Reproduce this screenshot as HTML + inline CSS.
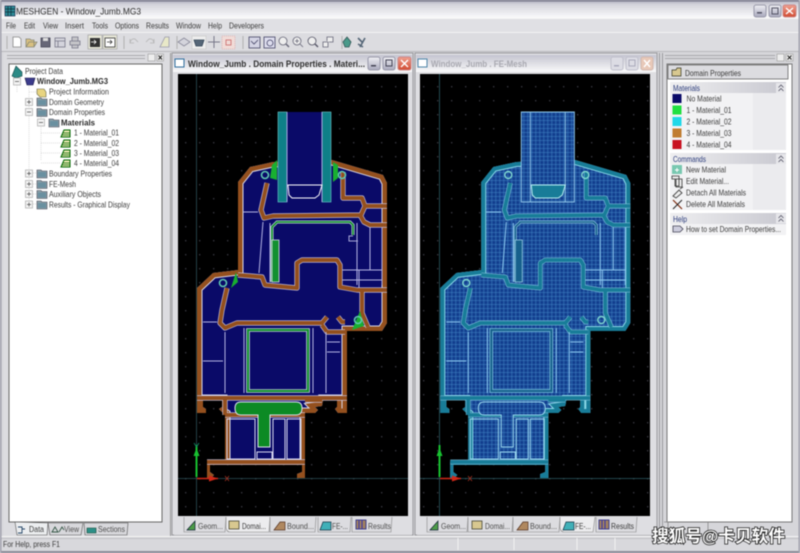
<!DOCTYPE html>
<html><head><meta charset="utf-8"><style>
html,body{margin:0;padding:0;background:#d6d6da;width:800px;height:553px;overflow:hidden}
svg{display:block;filter:blur(.4px)}
text{font-family:"Liberation Sans","Noto Sans CJK SC",sans-serif;font-size:8.6px;fill:#3c3c3c}
.lb{font-size:8.6px;fill:#505050}
</style></head><body>
<svg width="800" height="553" viewBox="0 0 800 553" xmlns="http://www.w3.org/2000/svg">
<defs>
<linearGradient id="tb" x1="0" y1="0" x2="0" y2="1"><stop offset="0" stop-color="#a8a8b8"/><stop offset=".25" stop-color="#d4d4dc"/><stop offset="1" stop-color="#fbfbfc"/></linearGradient>
<linearGradient id="tc" x1="0" y1="0" x2="0" y2="1"><stop offset="0" stop-color="#c4c4d0"/><stop offset="1" stop-color="#fafafa"/></linearGradient>
<linearGradient id="hd" x1="0" y1="0" x2="1" y2="0"><stop offset="0" stop-color="#eeeef0"/><stop offset="1" stop-color="#c8c8d0"/></linearGradient>
<linearGradient id="btn" x1="0" y1="0" x2="0" y2="1"><stop offset="0" stop-color="#f0f0f4"/><stop offset="1" stop-color="#a8a8bc"/></linearGradient>
<linearGradient id="cl" x1="0" y1="0" x2="0" y2="1"><stop offset="0" stop-color="#f0a090"/><stop offset="1" stop-color="#d04a30"/></linearGradient>
<pattern id="dots" width="14" height="14" patternUnits="userSpaceOnUse" x="3" y="2"><rect x="0" y="0" width="1.4" height="1.4" fill="#34343c"/></pattern>
<pattern id="mesh" width="4" height="4" patternUnits="userSpaceOnUse"><rect width="4" height="4" fill="#123e8e"/><path d="M0 .5H4M.5 0V4" stroke="#3f84c4" stroke-width=".6"/></pattern>
<path id="sil" d="M273 162L250 167L238 182L238 270L213 273L197 288L197 413L206 413L206 409L203 407L203 400L222 400L222 407L219 409L222 412L225 414L225 460L207 462L207 478L211 478L214 475L210 472L210 465L302 465L302 472L297 474L297 478L305 478L305 413L315 413L318 410L315 407L322 406L323 400L337 400L337 407L335 409L338 413L347 413L347 331L382 331L387 323L387 183L383 175L332 160Z"/>
<clipPath id="silc"><use href="#sil"/></clipPath>
<path id="walls" fill="none" stroke-linejoin="round" d="M267 183L261 210L264 218L273 216L360 215L364 222L370 225L387 225M343 172L343 198L362 198L365 206L387 206M365 206L361 215M238 275L262 277L265 285L297 288L297 263L302 260L337 260L340 265L340 287L357 290L387 290M362 290L362 313L368 327M227 288L222 310L220 323L225 328L237 323L322 323L327 317M322 325L327 332L345 332M338 317L342 322L345 322M197 398L347 398M225 398L225 415M225 415L305 415M207 462L305 462M305 400L322 400"/>
<path id="thin" fill="none" d="M225 332V393M203 322H217M203 361H223M244 328V393M313 328V393M326 332V393M327 342H340M327 352H340M243 212H258M263 222L259 273M270 223V282M357 223V285M370 227V270M342 270H382M382 227V285M342 280H382M359 270V288"/>
<path id="cav" fill="none" d="M227 419H255V459H227ZM273 419H285V459H273ZM287 419H301V459H287ZM257 452H272V459H257Z"/>
<path id="rect1" fill="none" d="M248 330H308V391H248Z"/>
<path id="glue" fill="none" d="M353 235V225L350 222H277L272 227V282"/>
<path id="blob" d="M241 402H296Q302 402 302 408Q302 415 296 415H270V447H258V415H241Q235 415 235 408Q235 402 241 402Z"/>
<path id="thick" d="M272 240H279V282H272Z"/>
<g id="seals" fill="none"><circle cx="265" cy="175" r="3.5"/><circle cx="342" cy="175" r="3.5"/><circle cx="223" cy="283" r="3.5"/><circle cx="358" cy="320" r="3.5"/></g>
<g id="ic-folder"><path d="M0 2H4L5 3H10V10H0Z" fill="#8aa0a8" stroke="#445" stroke-width=".6"/><rect x="1" y="4" width="8" height="5" fill="#6a90a0"/></g>
<g id="ic-mat"><path d="M0 9L3 2H9V9Z" fill="#e8e8b0" stroke="#060" stroke-width="1"/><path d="M2 5H9M1 7H9" stroke="#060" stroke-width=".8"/></g>
<g id="box"><rect x="-3.5" y="-3.5" width="7" height="7" fill="#f4f4f4" stroke="#aaa" stroke-width=".7"/><path d="M-2 0H2" stroke="#555" stroke-width=".8"/></g>
<g id="boxp"><use href="#box"/><path d="M0 -2V2" stroke="#555" stroke-width=".8"/></g>
<g id="chev"><rect x="-5" y="-5" width="10" height="10" fill="#e6e6ea"/><path d="M-2.5 -.5L0 -3L2.5 -.5M-2.5 3L0 .5L2.5 3" fill="none" stroke="#556" stroke-width=".8"/></g>
</defs>

<rect width="800" height="553" fill="#d6d6da"/>
<!-- title bar -->
<rect x="0" y="0" width="800" height="18" fill="url(#tb)"/>
<rect x="0" y="0" width="800" height="1.5" fill="#78788c"/>
<rect x="5" y="6" width="10" height="10" fill="#2c8a96" stroke="#124" stroke-width=".6"/>
<path d="M8 6V16M11 6V16M5 9H15M5 12H15" stroke="#10303a" stroke-width=".7"/>
<text x="16" y="14.5" textLength="125" lengthAdjust="spacingAndGlyphs" style="font-size:9.4px;fill:#303030">MESHGEN - Window_Jumb.MG3</text>
<rect x="754" y="5" width="12" height="12" rx="2" fill="url(#btn)" stroke="#99a"/><rect x="757" y="12" width="5" height="1.6" fill="#556"/>
<rect x="769" y="5" width="12" height="12" rx="2" fill="url(#btn)" stroke="#99a"/><rect x="772" y="8" width="6" height="6" fill="none" stroke="#556"/>
<rect x="783" y="5" width="13" height="12" rx="2" fill="url(#cl)" stroke="#c88"/><path d="M786 8L793 14M793 8L786 14" stroke="#fff" stroke-width="1.4"/>

<!-- menu -->
<rect x="0" y="18" width="800" height="14" fill="#e0e0e4"/>
<rect x="0" y="18" width="800" height="1" fill="#f4f4f4"/>
<g>
<text x="6" y="28.500" textLength="10" lengthAdjust="spacingAndGlyphs">File</text>
<text x="24" y="28.500" textLength="11" lengthAdjust="spacingAndGlyphs">Edit</text>
<text x="43" y="28.500" textLength="15" lengthAdjust="spacingAndGlyphs">View</text>
<text x="65" y="28.500" textLength="19" lengthAdjust="spacingAndGlyphs">Insert</text>
<text x="92" y="28.500" textLength="16" lengthAdjust="spacingAndGlyphs">Tools</text>
<text x="115" y="28.500" textLength="24" lengthAdjust="spacingAndGlyphs">Options</text>
<text x="146" y="28.500" textLength="23" lengthAdjust="spacingAndGlyphs">Results</text>
<text x="176" y="28.500" textLength="25" lengthAdjust="spacingAndGlyphs">Window</text>
<text x="208" y="28.500" textLength="14" lengthAdjust="spacingAndGlyphs">Help</text>
<text x="229" y="28.500" textLength="35" lengthAdjust="spacingAndGlyphs">Developers</text>
</g>
<rect x="0" y="32" width="800" height="1" fill="#f2f2f2"/>
<rect x="0" y="33" width="800" height="19" fill="#dcdce0"/>
<rect x="0" y="51" width="800" height="1" fill="#b8b8bc"/>
<!-- toolbar -->
<g stroke-width=".8">
<path d="M13 37H19L21 39V47H13Z" fill="#fff" stroke="#888"/>
<path d="M26 47V39H30L31 40H34V47Z M26 47L29 42H37L34 47Z" fill="#d8c080" stroke="#887"/>
<rect x="41" y="38" width="9" height="9" fill="#667" stroke="#445"/><rect x="43" y="38" width="5" height="3" fill="#ddd"/>
<rect x="55" y="38" width="10" height="9" fill="#d4d4dc" stroke="#778"/><path d="M55 41H65M58 41V47" stroke="#778"/>
<path d="M70 45V41H80V45ZM72 41V37H78V41M72 45V48H78V45" fill="#c4c4c8" stroke="#778"/>
<rect x="88" y="35" width="14" height="14" fill="#e8e8d8" stroke="#aaa"/><rect x="90" y="38" width="10" height="9" fill="#333"/><path d="M91 42H96M94 40L96 42L94 44" stroke="#fff" fill="none"/>
<rect x="103" y="35" width="14" height="14" fill="#e8e8d8" stroke="#aaa"/><rect x="105" y="38" width="10" height="9" fill="#fff" stroke="#333"/><path d="M107 42H112M110 40L112 42L110 44" stroke="#333" fill="none"/>
<path d="M130 43Q131 38 135 39L138 42M130 39V43H134" fill="none" stroke="#b4b4b4"/>
<path d="M154 43Q153 38 149 39L146 42M154 39V43H150" fill="none" stroke="#b4b4b4"/>
<path d="M160 47L165 37H169V47Z" fill="#e8e8c8" stroke="#99a"/>
<path d="M178 42L184 38L190 42L184 46Z" fill="#d4d4dc" stroke="#889"/>
<rect x="192" y="36" width="14" height="13" fill="#eee" stroke="#ccc"/><path d="M194 40H204L202 46H196Z" fill="#567" stroke="#345"/>
<path d="M214 36V48M208 42H220" stroke="#778" stroke-width="1"/>
<rect x="222" y="36" width="13" height="13" fill="#f0dcd8" stroke="#daa" stroke-dasharray="1 1"/><rect x="226" y="40" width="5" height="5" fill="none" stroke="#c66"/>
<rect x="249" y="37" width="11" height="11" fill="#d4d4e4" stroke="#446"/><path d="M251 41L254 44L258 40" stroke="#446" fill="none"/>
<rect x="264" y="37" width="11" height="11" fill="#dde" stroke="#446"/><circle cx="270" cy="43" r="3" fill="none" stroke="#446"/>
<circle cx="283" cy="41" r="4" fill="#eee" stroke="#667"/><path d="M286 44L289 47" stroke="#667" stroke-width="1.4"/>
<circle cx="297" cy="41" r="4" fill="#eee" stroke="#667"/><path d="M300 44L303 47M295 41H299M297 39V43" stroke="#667"/>
<circle cx="312" cy="41" r="4" fill="#eee" stroke="#556"/><path d="M315 44L318 47" stroke="#556" stroke-width="1.4"/>
<path d="M323 47V42H328V47ZM327 41V37H333V42H329" fill="#eee" stroke="#667"/>
<path d="M347 37L351 42L349 47H345L343 42Z" fill="#4a9a8a" stroke="#355"/>
<path d="M358 38L362 42M365 38L360 47M358 44L363 47" stroke="#567" stroke-width="1.6" fill="none"/>
</g>
<path d="M7 36V49M124 36V49M177 36V49M243 36V49M342 36V49" stroke="#b0b0b0" stroke-width="1"/>

<!-- left pane -->
<rect x="3" y="52" width="165" height="486" fill="#dcdce0"/>
<path d="M7 55.5H145M7 58.5H145" stroke="#a8a8ac" stroke-width="1"/>
<rect x="148" y="54" width="7" height="7" fill="#eee" stroke="#999" stroke-width=".6"/>
<rect x="157" y="54" width="6.5" height="7" fill="#eee" stroke="#999" stroke-width=".6"/><path d="M158.500 55.500L162 59.500M162 55.500L158.500 59.500" stroke="#222" stroke-width="1"/>
<rect x="9" y="64" width="153" height="458" fill="#fff" stroke="#666" stroke-width="1"/>
<path d="M17 85V92M29 86V204M41 117V160M41 133H60M41 143H60M41 153H60M41 163H60M29 92H36M29 173H36M29 184H36M29 194H36M29 204H36" stroke="#d0d0d0" stroke-width=".7" fill="none" stroke-dasharray="1 1"/>
<path d="M12 76L16 66L22 72V76L16 78Z" fill="#2c8a86" stroke="#144" stroke-width=".6"/>
<path d="M25 78H35L33 85H27Z" fill="#3c3c8c" stroke="#114" stroke-width=".6"/>
<use href="#box" x="17" y="81.500"/>
<use href="#boxp" x="29" y="102"/><use href="#box" x="29" y="112"/><use href="#box" x="41" y="122.500"/>
<use href="#boxp" x="29" y="173.500"/><use href="#boxp" x="29" y="184"/><use href="#boxp" x="29" y="194"/><use href="#boxp" x="29" y="204.500"/>
<path d="M37 89H44L46 92V97H40L37 94Z" fill="#e8d480" stroke="#664" stroke-width=".6"/>
<use href="#ic-folder" x="37" y="96"/><use href="#ic-folder" x="37" y="106.500"/><use href="#ic-folder" x="49" y="117"/>
<use href="#ic-mat" x="61" y="128"/><use href="#ic-mat" x="61" y="138"/><use href="#ic-mat" x="61" y="148"/><use href="#ic-mat" x="61" y="158"/>
<use href="#ic-folder" x="37" y="168"/><use href="#ic-folder" x="37" y="178.500"/><use href="#ic-folder" x="37" y="188.500"/><use href="#ic-folder" x="37" y="199"/>
<text x="25" y="74" textLength="38" lengthAdjust="spacingAndGlyphs">Project Data</text>
<text x="37" y="84" textLength="71" lengthAdjust="spacingAndGlyphs" style="font-weight:bold;fill:#2a2a2a">Window_Jumb.MG3</text>
<text x="49" y="94.500" textLength="60" lengthAdjust="spacingAndGlyphs">Project Information</text>
<text x="49" y="105" textLength="55" lengthAdjust="spacingAndGlyphs">Domain Geometry</text>
<text x="49" y="115" textLength="56" lengthAdjust="spacingAndGlyphs">Domain Properties</text>
<text x="61" y="125.500" textLength="34" lengthAdjust="spacingAndGlyphs" style="font-weight:bold;fill:#2a2a2a">Materials</text>
<text x="74" y="135.500" textLength="45" lengthAdjust="spacingAndGlyphs">1 - Material_01</text>
<text x="74" y="146" textLength="45" lengthAdjust="spacingAndGlyphs">2 - Material_02</text>
<text x="74" y="156" textLength="45" lengthAdjust="spacingAndGlyphs">3 - Material_03</text>
<text x="74" y="166" textLength="45" lengthAdjust="spacingAndGlyphs">4 - Material_04</text>
<text x="49" y="176.500" textLength="63" lengthAdjust="spacingAndGlyphs">Boundary Properties</text>
<text x="49" y="187" textLength="27" lengthAdjust="spacingAndGlyphs">FE-Mesh</text>
<text x="49" y="197" textLength="52" lengthAdjust="spacingAndGlyphs">Auxiliary Objects</text>
<text x="49" y="207.500" textLength="81" lengthAdjust="spacingAndGlyphs">Results - Graphical Display</text>
<!-- left tabs -->
<path d="M15 522L17 535H47L48 523Z" fill="#eceef0" stroke="#555" stroke-width=".6"/>
<path d="M48 523L50 535H81L83 523Z" fill="#d8d8dc" stroke="#555" stroke-width=".6"/>
<path d="M84 523L85 535H127L128 523Z" fill="#d8d8dc" stroke="#555" stroke-width=".6"/>
<path d="M18 527H22V533H18M22 529H25" fill="none" stroke="#246" stroke-width=".9"/>
<path d="M52 532L55 527L58 532ZM59 532L62 527L64 530" fill="none" stroke="#354" stroke-width=".9"/>
<path d="M87 528H96V533H87Z" fill="#2c9088" stroke="#143" stroke-width=".6"/>
<text x="29" y="532" textLength="15" lengthAdjust="spacingAndGlyphs">Data</text>
<text x="64" y="532" textLength="15" lengthAdjust="spacingAndGlyphs" class="lb">View</text>
<text x="98" y="532" textLength="27" lengthAdjust="spacingAndGlyphs" class="lb">Sections</text>

<!-- MDI edge -->
<rect x="168" y="52" width="4" height="486" fill="#dcdce0"/>
<path d="M170.500 53V536" stroke="#999" stroke-width="1"/>

<!-- child 1 -->
<rect x="172" y="53" width="241" height="482" fill="#dedee2" stroke="#98989c" stroke-width="1"/>
<rect x="173" y="55" width="239" height="17" fill="url(#tc)"/>
<rect x="175" y="59" width="9" height="8" fill="#fff" stroke="#2c6c9c"/>
<text x="188" y="67" textLength="177" lengthAdjust="spacingAndGlyphs" style="font-size:9.4px;font-weight:bold;fill:#303030">Window_Jumb . Domain Properties . Materi...</text>
<rect x="368" y="57" width="12" height="13" rx="2" fill="url(#btn)" stroke="#99a"/><rect x="371" y="65" width="5" height="1.5" fill="#445"/>
<rect x="383" y="57" width="12" height="13" rx="2" fill="url(#btn)" stroke="#99a"/><rect x="386" y="60" width="6" height="6" fill="none" stroke="#445"/>
<rect x="398" y="57" width="13" height="13" rx="2" fill="url(#cl)" stroke="#c88"/><path d="M401 60L408 67M408 60L401 67" stroke="#fff" stroke-width="1.4"/>
<rect x="178" y="74" width="230" height="442" fill="#000"/>
<rect x="178" y="74" width="230" height="442" fill="url(#dots)"/>
<path d="M196.500 74V516M178 478.500H408" stroke="#2c5058" stroke-width=".8"/>

<!-- drawing 1 -->
<use href="#sil" fill="#0a0a68"/>
<g clip-path="url(#silc)"><use href="#sil" fill="none" stroke="#d8d8e8" stroke-width="11"/><use href="#sil" fill="none" stroke="#94501e" stroke-width="9"/></g>
<use href="#walls" stroke="#ccccee" stroke-width="5.200"/><use href="#walls" stroke="#94501e" stroke-width="4"/>
<use href="#thin" stroke="#b4b4e4" stroke-width="1"/>
<use href="#cav" stroke="#d8d8f0" stroke-width="1"/>
<rect x="278" y="112" width="9" height="90" fill="#0f8088" stroke="#70c8cc" stroke-width=".6"/>
<rect x="322" y="112" width="9" height="90" fill="#0f8088" stroke="#70c8cc" stroke-width=".6"/>
<rect x="287" y="112" width="35" height="90" fill="#0a0a68"/>
<path d="M287 112V202M322 112V202" stroke="#a8a8e0" stroke-width="1"/>
<path d="M288 185H322L319 195L315 198H292L289 195Z" fill="#0a0a68" stroke="#fff" stroke-width="1"/>
<use href="#rect1" stroke="#e0e0f0" stroke-width="3.600"/><use href="#rect1" stroke="#129030" stroke-width="2.200"/>
<use href="#glue" stroke="#e0e0f0" stroke-width="3"/><use href="#glue" stroke="#129030" stroke-width="1.800"/>
<use href="#thick" fill="#129030" stroke="#dde" stroke-width=".8"/>
<path d="M353 236H349V241H358" fill="none" stroke="#a8a8d8" stroke-width="1"/>
<use href="#blob" fill="#0c8a24" stroke="#e0e0f0" stroke-width="1"/>
<path d="M272 165L277 160V180L270 178ZM333 162V182L338 178L338 165ZM236 272L231 288L238 282ZM352 330L360 311L364 326Z" fill="#18b030"/>
<use href="#seals" stroke="#60c8b0" stroke-width="1.600"/>
<path d="M196.500 445V477" stroke="#18c030" stroke-width="2"/><path d="M193.500 456L196.500 448L199.500 456Z" fill="#18c030"/><path d="M194 443L196.500 447L199 443" fill="none" stroke="#186" stroke-width=".8"/>
<path d="M197 478.500H218" stroke="#d02818" stroke-width="1.500"/><path d="M209 475.500L218 478.500L209 481.500Z" fill="#d02818"/><path d="M225 476L229 481M229 476L225 481" stroke="#a03020" stroke-width=".8"/>

<!-- child 1 tabs -->
<rect x="174" y="516" width="238" height="19" fill="#dedee2"/>
<g fill="#dcdce0" stroke="#888" stroke-width=".6">
<path d="M184 517V532H225L226 517"/><path d="M226 517V528Q227 532 230 532H269L270 517" fill="#ececee"/><path d="M270 517V532H315L316 517"/><path d="M318 517V532H350L351 517"/><path d="M352 517V532H391L392 517"/>
</g>
<path d="M187 530L195 521V530Z" fill="#4c9c48" stroke="#123" stroke-width=".7"/>
<rect x="229" y="521" width="10" height="8" fill="#d8c890" stroke="#332" stroke-width=".7"/>
<path d="M274 530L280 522H285V530Z" fill="#b08860" stroke="#532" stroke-width=".7"/>
<path d="M320 530L323 522H331V530Z" fill="#40b0b8" stroke="#134" stroke-width=".7"/>
<rect x="356" y="520" width="10" height="9" fill="#a08060" stroke="#338" stroke-width=".9"/><path d="M359 520V529M362 520V529" stroke="#33a"/>
<text x="198" y="529" textLength="25" lengthAdjust="spacingAndGlyphs" class="lb">Geom...</text>
<text x="242" y="529" textLength="24" lengthAdjust="spacingAndGlyphs">Domai...</text>
<text x="287" y="529" textLength="27" lengthAdjust="spacingAndGlyphs" class="lb">Bound...</text>
<text x="332" y="529" textLength="16" lengthAdjust="spacingAndGlyphs" class="lb">FE-...</text>
<text x="368" y="529" textLength="23" lengthAdjust="spacingAndGlyphs" class="lb">Results</text>

<!-- child 2 -->
<rect x="415" y="53" width="242" height="482" fill="#dedee2" stroke="#98989c" stroke-width="1"/>
<rect x="416" y="55" width="240" height="17" fill="url(#tc)"/>
<rect x="418" y="59" width="9" height="8" fill="#fff" stroke="#4c84a8"/>
<text x="431" y="67" textLength="96" lengthAdjust="spacingAndGlyphs" style="font-size:9.4px;font-weight:bold;fill:#a8a8b0">Window_Jumb . FE-Mesh</text>
<rect x="611" y="57" width="12" height="13" rx="2" fill="#dcdce4" stroke="#c0c0cc"/><rect x="614" y="65" width="5" height="1.5" fill="#aab"/>
<rect x="626" y="57" width="12" height="13" rx="2" fill="#dcdce4" stroke="#c0c0cc"/><rect x="629" y="60" width="6" height="6" fill="none" stroke="#aab"/>
<rect x="641" y="57" width="12" height="13" rx="2" fill="#e8c8b8" stroke="#d0b8b0"/><path d="M644 60L650 67M650 60L644 67" stroke="#fff" stroke-width="1.4"/>
<rect x="420" y="74" width="230" height="442" fill="#000"/>
<rect x="420" y="74" width="230" height="442" fill="url(#dots)"/>
<path d="M439.500 74V516M420 478.500H650" stroke="#2c5c64" stroke-width=".8"/>

<!-- drawing 2 -->
<g transform="translate(243.300 0)">
<use href="#sil" fill="url(#mesh)"/>
<g clip-path="url(#silc)"><use href="#sil" fill="none" stroke="#8ad8e8" stroke-width="10"/><use href="#sil" fill="none" stroke="#187c98" stroke-width="8"/></g>
<use href="#walls" stroke="#8cc8e4" stroke-width="4.800"/><use href="#walls" stroke="#187c98" stroke-width="3.800"/>
<use href="#thin" stroke="#8cc8f0" stroke-width="1"/>
<use href="#cav" stroke="#9ad8f0" stroke-width="1"/>
<rect x="278" y="112" width="53" height="90" fill="url(#mesh)" stroke="#8cc4e8" stroke-width="1"/>
<path d="M287 112V202M322 112V202" stroke="#8cc4e8" stroke-width="1"/>
<path d="M288 185H322L319 195L315 198H292L289 195Z" fill="#187c98" stroke="#b8f0f0" stroke-width="1"/>
<use href="#rect1" stroke="#8ad0e8" stroke-width="3.600"/><use href="#rect1" stroke="#16608c" stroke-width="2.200"/>
<use href="#glue" stroke="#9ad0e8" stroke-width="2.800"/><use href="#glue" stroke="#16608c" stroke-width="1.600"/>
<use href="#blob" fill="url(#mesh)" stroke="#9ad8f0" stroke-width="1"/>
<use href="#thick" fill="#16608c" stroke="#9ad0e8" stroke-width=".8"/>
<use href="#seals" stroke="#80d8d0" stroke-width="1.400"/>
</g>
<path d="M439.500 445V477" stroke="#18c030" stroke-width="2"/><path d="M436.500 456L439.500 448L442.500 456Z" fill="#18c030"/>
<path d="M440 478.500H461" stroke="#d02818" stroke-width="1.500"/><path d="M452 475.500L461 478.500L452 481.500Z" fill="#d02818"/><path d="M468 476L472 481M472 476L468 481" stroke="#a03020" stroke-width=".8"/>

<!-- child 2 tabs -->
<rect x="417" y="516" width="239" height="19" fill="#dedee2"/>
<g fill="#dcdce0" stroke="#888" stroke-width=".6">
<path d="M427 517V532H467L468 517"/><path d="M468 517V532H512L513 517"/><path d="M513 517V532H559L560 517"/><path d="M560 517V528Q561 532 564 532H593L595 517" fill="#ececee"/><path d="M596 517V532H636L637 517"/>
</g>
<path d="M430 530L438 521V530Z" fill="#4c9c48" stroke="#123" stroke-width=".7"/>
<rect x="472" y="521" width="10" height="8" fill="#d8c890" stroke="#332" stroke-width=".7"/>
<path d="M517 530L523 522H528V530Z" fill="#b08860" stroke="#532" stroke-width=".7"/>
<path d="M563 530L566 522H574V530Z" fill="#40b0b8" stroke="#134" stroke-width=".7"/>
<rect x="599" y="520" width="10" height="9" fill="#a08060" stroke="#338" stroke-width=".9"/><path d="M602 520V529M605 520V529" stroke="#33a"/>
<text x="441" y="529" textLength="25" lengthAdjust="spacingAndGlyphs" class="lb">Geom...</text>
<text x="485" y="529" textLength="25" lengthAdjust="spacingAndGlyphs" class="lb">Domai...</text>
<text x="530" y="529" textLength="27" lengthAdjust="spacingAndGlyphs" class="lb">Bound...</text>
<text x="575" y="529" textLength="16" lengthAdjust="spacingAndGlyphs">FE-...</text>
<text x="611" y="529" textLength="23" lengthAdjust="spacingAndGlyphs">Results</text>

<!-- right pane -->
<path d="M659.500 53V536M662.500 53V536" stroke="#98989c" stroke-width="1"/>
<path d="M665 55.500H775M665 58.500H775" stroke="#a8a8ac" stroke-width="1"/>
<rect x="777" y="54" width="7" height="7" fill="#eee" stroke="#999" stroke-width=".6"/>
<rect x="786" y="54" width="7" height="7" fill="#eee" stroke="#999" stroke-width=".6"/><path d="M787.500 55.500L791.500 59.500M791.500 55.500L787.500 59.500" stroke="#222"/>
<rect x="667" y="64" width="125" height="458" fill="#fff" stroke="#777" stroke-width="1"/>
<rect x="668" y="65" width="120" height="14" fill="#dcdce0" stroke="#666" stroke-width=".8"/>
<path d="M672 76V70H676L677 68H681V76Z" fill="#d8c890" stroke="#332" stroke-width=".7"/>
<text x="685" y="76" textLength="56" lengthAdjust="spacingAndGlyphs">Domain Properties</text>
<!-- groups -->
<rect x="670" y="82" width="116" height="68" fill="#ebebee"/>
<rect x="670" y="82" width="116" height="11" fill="url(#hd)"/>
<text x="673" y="91" textLength="27" lengthAdjust="spacingAndGlyphs" style="fill:#2c3c7c">Materials</text>
<use href="#chev" x="781" y="88"/>
<rect x="670" y="93" width="83" height="57" fill="#f2f2f4"/>
<rect x="672.500" y="94" width="9" height="9" fill="#0a0a68"/>
<rect x="672.500" y="105.500" width="9" height="9" fill="#20e040"/>
<rect x="672.500" y="117" width="9" height="9" fill="#20d8e8"/>
<rect x="672.500" y="128.500" width="9" height="9" fill="#c07c30"/>
<rect x="672.500" y="140" width="9" height="9" fill="#c81020"/>
<text x="686.500" y="101.500" textLength="35" lengthAdjust="spacingAndGlyphs">No Material</text>
<text x="686.500" y="113" textLength="45" lengthAdjust="spacingAndGlyphs">1 - Material_01</text>
<text x="686.500" y="124.500" textLength="45" lengthAdjust="spacingAndGlyphs">2 - Material_02</text>
<text x="686.500" y="136" textLength="45" lengthAdjust="spacingAndGlyphs">3 - Material_03</text>
<text x="686.500" y="147.500" textLength="45" lengthAdjust="spacingAndGlyphs">4 - Material_04</text>
<rect x="670" y="153" width="116" height="57" fill="#ebebee"/>
<rect x="670" y="153" width="116" height="11" fill="url(#hd)"/>
<text x="673" y="162" textLength="33" lengthAdjust="spacingAndGlyphs" style="fill:#2c3c7c">Commands</text>
<use href="#chev" x="781" y="159"/>
<rect x="670" y="164" width="83" height="46" fill="#f2f2f4"/>
<rect x="672" y="165" width="10" height="9" fill="#78c8b0"/><path d="M675 170H679M677 168V172" stroke="#fff"/>
<path d="M672 176H679V186H675V179H672ZM676 179H682V187H676Z" fill="#eee" stroke="#333" stroke-width=".8"/>
<path d="M673 196L679 190L682 193L676 198ZM680 189L683 187" fill="#eee" stroke="#444" stroke-width=".9"/>
<path d="M673 200L682 209" stroke="#7c2c10" stroke-width="1.200"/><path d="M682 200L673 209" stroke="#222" stroke-width="1"/>
<text x="686" y="172.500" textLength="40" lengthAdjust="spacingAndGlyphs">New Material</text>
<text x="686" y="184" textLength="43" lengthAdjust="spacingAndGlyphs">Edit Material...</text>
<text x="686" y="195.500" textLength="60" lengthAdjust="spacingAndGlyphs">Detach All Materials</text>
<text x="686" y="207" textLength="59" lengthAdjust="spacingAndGlyphs">Delete All Materials</text>
<rect x="670" y="213" width="116" height="22" fill="#f2f2f4"/>
<rect x="670" y="213" width="116" height="11" fill="url(#hd)"/>
<text x="673" y="222" textLength="14" lengthAdjust="spacingAndGlyphs" style="fill:#2c3c7c">Help</text>
<use href="#chev" x="781" y="218.500"/>
<path d="M673 226H680L683 229L680 232H673Z" fill="#ccd" stroke="#445" stroke-width=".8"/>
<text x="686" y="232" textLength="95" lengthAdjust="spacingAndGlyphs">How to set Domain Properties...</text>
<path d="M664 522H668V532M708 522V535" stroke="#888" stroke-width=".8" fill="none"/>

<!-- status -->
<rect x="0" y="536" width="800" height="17" fill="#d8d8dc"/>
<path d="M0 536.500H800" stroke="#f4f4f4"/>
<path d="M0 538.500H800" stroke="#aaaaae" stroke-width=".6"/>
<path d="M458 538V550M514 538V550M577 538V550M615 538V550" stroke="#f2f2f2" stroke-width="1"/>
<rect x="0" y="551" width="800" height="2" fill="#8c8c98"/>
<text x="3" y="547" textLength="57" lengthAdjust="spacingAndGlyphs">For Help, press F1</text>
<rect x="0" y="0" width="1.500" height="553" fill="#a0a0ac"/>
<rect x="798.500" y="0" width="1.500" height="553" fill="#a0a0ac"/>
<!-- watermark -->
<text x="652" y="542" textLength="133" lengthAdjust="spacingAndGlyphs" style="font-size:17px;font-weight:bold;fill:#fff;stroke:#1c1c1c;stroke-width:1.600px;paint-order:stroke">搜狐号@卡贝软件</text>
</svg>
</body></html>
